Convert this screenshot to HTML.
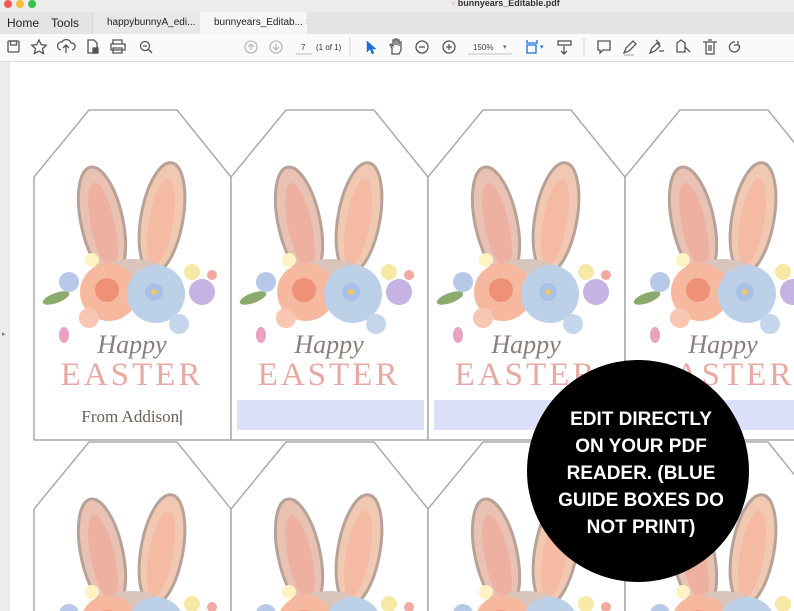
<!DOCTYPE html>
<html><head><meta charset="utf-8"><style>
html,body{margin:0;width:794px;height:611px;overflow:hidden}
body{font-family:"Liberation Sans",sans-serif;background:#fff;position:relative}
.title{position:absolute;left:0;top:0;width:794px;height:12px;background:#ececec}
.tabs{position:absolute;left:0;top:12px;width:794px;height:22px;background:#e4e4e4;border-bottom:1px solid #d8d8d8}
.tab{position:absolute;top:0;height:22px;line-height:22px;font-size:10px;color:#222;white-space:nowrap;overflow:hidden}
.tb{position:absolute;left:0;top:34px;width:794px;height:27px;background:#fafafa;border-bottom:1px solid #ddd}
.side{position:absolute;left:0;top:62px;width:10px;height:549px;background:#ececec}
</style></head><body>
<div class="title">
<div style="position:absolute;left:4px;top:0;width:8px;height:8px;border-radius:50%;background:#f25a52"></div>
<div style="position:absolute;left:16px;top:0;width:8px;height:8px;border-radius:50%;background:#f6be3a"></div>
<div style="position:absolute;left:28px;top:0;width:8px;height:8px;border-radius:50%;background:#36c343"></div>
<div style="position:absolute;left:452px;top:-2px;font-size:9px;color:#333;font-weight:bold;white-space:nowrap"><span style="color:#d88">▫</span> bunnyears_Editable.pdf</div>
</div>
<div class="tabs">
<div class="tab" style="left:7px;font-size:12px">Home</div>
<div class="tab" style="left:51px;font-size:12px">Tools</div>
<div class="tab" style="left:92px;width:107px;background:#e8e8e8;border-left:1px solid #d5d5d5;padding-left:14px;box-sizing:border-box">happybunnyA_edi...</div>
<div class="tab" style="left:200px;width:107px;background:#f6f6f6;padding-left:14px;box-sizing:border-box">bunnyears_Editab... <span style="color:#555">×</span></div>
</div>
<div class="tb"></div>
<svg width="794" height="27" style="position:absolute;left:0;top:34px" fill="none" stroke="#555" stroke-width="1.3">
<rect x="8" y="7" width="11" height="11" rx="1"/><rect x="10.5" y="7" width="6" height="4"/>
<path d="M39 6l2.2 4.6 5 .6-3.7 3.4 1 5-4.5-2.5-4.5 2.5 1-5-3.7-3.4 5-.6z"/>
<path d="M61 16a4 4 0 0 1 1-8 5 5 0 0 1 9 1 3.5 3.5 0 0 1 1 7M66 19v-8m-3 3l3-3 3 3"/>
<path d="M88 6h6l3 3v10h-9z"/><rect x="93" y="14" width="5" height="5" fill="#555"/>
<path d="M113 10v-4h9v4M111 10h14v6h-14zM113 14h9v5h-9z" fill="#fff"/>
<circle cx="145" cy="12" r="4.5"/><path d="M148 15l4 4M143 12h4"/>
<g stroke="#bbb"><circle cx="251" cy="13" r="6"/><path d="M251 16v-6m-3 3l3-3 3 3"/><circle cx="276" cy="13" r="6"/><path d="M276 10v6m-3-3l3 3 3-3"/></g>
<path d="M296 20h16" stroke="#ccc"/>
<path d="M350 4v18" stroke="#ddd"/>
<path d="M367 7l0 11 3-3 2 5 2-1-2-4 4 0z" fill="#1a6fd8" stroke="#1a6fd8" stroke-width=".5"/>
<path d="M392 20v-6l-2-3 1-1 2 2v-6h2v5-6h2v6-5h2v6-4h2v8l-2 4z"/>
<circle cx="422" cy="13" r="6"/><path d="M419 13h6"/>
<circle cx="449" cy="13" r="6"/><path d="M446 13h6M449 10v6"/>
<path d="M468 20h44" stroke="#ccc"/>
<path d="M527 6v3h10v-3M527 19v-8h9v8z" stroke="#1a6fd8"/>
<rect x="558" y="7" width="13" height="4"/><path d="M564 12v8m-3-3l3 3 3-3"/>
<path d="M584 4v18" stroke="#ddd"/>
<path d="M598 7h12v9h-7l-3 3v-3h-2z"/>
<path d="M624 19l2-5 7-7 3 3-7 7z"/><path d="M624 21h10" stroke="#bbb"/>
<path d="M650 19l2-5 5-5 3 3-5 5zM656 6l4 4M659 17h5"/>
<path d="M677 9l4-3 4 3v9h-8zM685 13l5 5"/>
<path d="M703 8h14M706 8v12h8v-12M708 6h4M709 11v6M711 11v6"/>
<path d="M735 8a5 5 0 1 0 4 3M738 7v4h-4"/>
</svg>
<div style="position:absolute;left:301px;top:43px;font-size:8px;color:#333">7</div>
<div style="position:absolute;left:316px;top:43px;font-size:8px;color:#333">(1 of 1)</div>
<div style="position:absolute;left:473px;top:43px;font-size:8px;color:#444">150%</div>
<div style="position:absolute;left:503px;top:43px;font-size:7px;color:#666">▾</div>
<div style="position:absolute;left:540px;top:43px;font-size:7px;color:#1a6fd8">▾</div>
<div class="side"><div style="position:absolute;left:2px;top:268px;font-size:7px;color:#777">▸</div></div>

<svg width="794" height="549" viewBox="0 62 794 549" style="position:absolute;left:0;top:62px">
<defs>
<g id="art">
<polygon points="55,0 143,0 197,67 197,330 0,330 0,67" fill="#fff" stroke="#aaa" stroke-width="1.5"/>
<ellipse cx="68" cy="112" rx="21" ry="56" transform="rotate(-12 68 112)" fill="#e9c2b4" stroke="#b7a298" stroke-width="3"/>
<ellipse cx="69" cy="116" rx="12" ry="44" transform="rotate(-12 69 116)" fill="#f0a899" opacity=".7"/>
<ellipse cx="128" cy="108" rx="21" ry="56" transform="rotate(10 128 108)" fill="#f1c9b3" stroke="#b7a298" stroke-width="3"/>
<ellipse cx="127" cy="112" rx="12" ry="44" transform="rotate(10 127 112)" fill="#f5b49e" opacity=".7"/>
<ellipse cx="98" cy="165" rx="34" ry="16" fill="#d9c5bc"/>
<ellipse cx="22" cy="188" rx="14" ry="5" fill="#8bab6d" transform="rotate(-20 22 188)"/>
<circle cx="35" cy="172" r="10" fill="#b8c8e8"/>
<circle cx="168" cy="182" r="13" fill="#c7b3e3"/>
<circle cx="158" cy="162" r="8" fill="#f6e8a5"/>
<circle cx="178" cy="165" r="5" fill="#f2aaa0"/>
<circle cx="75" cy="182" r="29" fill="#f6b9a0"/>
<circle cx="73" cy="180" r="12" fill="#ef9177"/>
<circle cx="122" cy="184" r="29" fill="#bcd0e8"/>
<circle cx="120" cy="182" r="9" fill="#a8c1e6"/>
<circle cx="120" cy="182" r="3" fill="#f2c860"/>
<circle cx="58" cy="150" r="7" fill="#fff3c4"/>
<circle cx="145" cy="214" r="10" fill="#c5d6ec"/>
<circle cx="55" cy="208" r="10" fill="#f8c6b2"/>
<ellipse cx="30" cy="225" rx="5" ry="8" fill="#e9a2c0"/>
</g>
</defs>
<g font-family="Liberation Serif,serif">
<g transform="translate(34,110)"><use href="#art"/>
<text x="98" y="243" text-anchor="middle" font-size="26" font-style="italic" fill="#8a7f7a">Happy</text>
<text x="98" y="275" text-anchor="middle" font-size="33" letter-spacing="3" fill="#e9a9a3">EASTER</text>
<text x="98" y="312" text-anchor="middle" font-size="17" fill="#6e6258">From Addison<tspan fill="#000">|</tspan></text></g>
<g transform="translate(231,110)"><use href="#art"/>
<text x="98" y="243" text-anchor="middle" font-size="26" font-style="italic" fill="#8a7f7a">Happy</text>
<text x="98" y="275" text-anchor="middle" font-size="33" letter-spacing="3" fill="#e9a9a3">EASTER</text>
<rect x="6" y="290" width="187" height="30" fill="#dde0fa"/></g>
<g transform="translate(428,110)"><use href="#art"/>
<text x="98" y="243" text-anchor="middle" font-size="26" font-style="italic" fill="#8a7f7a">Happy</text>
<text x="98" y="275" text-anchor="middle" font-size="33" letter-spacing="3" fill="#e9a9a3">EASTER</text>
<rect x="6" y="290" width="187" height="30" fill="#dde0fa"/></g>
<g transform="translate(625,110)"><use href="#art"/>
<text x="98" y="243" text-anchor="middle" font-size="26" font-style="italic" fill="#8a7f7a">Happy</text>
<text x="98" y="275" text-anchor="middle" font-size="33" letter-spacing="3" fill="#e9a9a3">EASTER</text>
<rect x="6" y="290" width="187" height="30" fill="#dde0fa"/></g>
<g transform="translate(34,442)"><use href="#art"/></g>
<g transform="translate(231,442)"><use href="#art"/></g>
<g transform="translate(428,442)"><use href="#art"/></g>
<g transform="translate(625,442)"><use href="#art"/></g>
</g>
<circle cx="638" cy="471" r="111" fill="#000"/>
<g font-family="Liberation Sans,sans-serif" font-weight="bold" font-size="19" fill="#fff" text-anchor="middle">
<text x="641" y="425">EDIT DIRECTLY</text>
<text x="641" y="452">ON YOUR PDF</text>
<text x="641" y="479">READER. (BLUE</text>
<text x="641" y="506">GUIDE BOXES DO</text>
<text x="641" y="533">NOT PRINT)</text>
</g>
</svg>
</body></html>
